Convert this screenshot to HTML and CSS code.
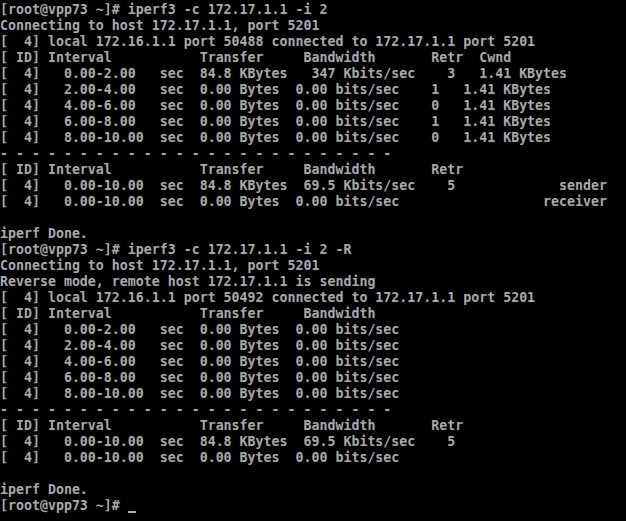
FILE: index.html
```html
<!DOCTYPE html>
<html>
<head>
<meta charset="utf-8">
<link rel="stylesheet" href="styles.css">
</head>
<body>
<pre class="console">[root@vpp73 ~]# iperf3 -c 172.17.1.1 -i 2
Connecting to host 172.17.1.1, port 5201
[  4] local 172.16.1.1 port 50488 connected to 172.17.1.1 port 5201
[ ID] Interval           Transfer     Bandwidth       Retr  Cwnd
[  4]   0.00-2.00   sec  84.8 KBytes   347 Kbits/sec    3   1.41 KBytes
[  4]   2.00-4.00   sec  0.00 Bytes  0.00 bits/sec    1   1.41 KBytes
[  4]   4.00-6.00   sec  0.00 Bytes  0.00 bits/sec    0   1.41 KBytes
[  4]   6.00-8.00   sec  0.00 Bytes  0.00 bits/sec    1   1.41 KBytes
[  4]   8.00-10.00  sec  0.00 Bytes  0.00 bits/sec    0   1.41 KBytes
- - - - - - - - - - - - - - - - - - - - - - - - -
[ ID] Interval           Transfer     Bandwidth       Retr
[  4]   0.00-10.00  sec  84.8 KBytes  69.5 Kbits/sec    5             sender
[  4]   0.00-10.00  sec  0.00 Bytes  0.00 bits/sec                  receiver

iperf Done.
[root@vpp73 ~]# iperf3 -c 172.17.1.1 -i 2 -R
Connecting to host 172.17.1.1, port 5201
Reverse mode, remote host 172.17.1.1 is sending
[  4] local 172.16.1.1 port 50492 connected to 172.17.1.1 port 5201
[ ID] Interval           Transfer     Bandwidth
[  4]   0.00-2.00   sec  0.00 Bytes  0.00 bits/sec
[  4]   2.00-4.00   sec  0.00 Bytes  0.00 bits/sec
[  4]   4.00-6.00   sec  0.00 Bytes  0.00 bits/sec
[  4]   6.00-8.00   sec  0.00 Bytes  0.00 bits/sec
[  4]   8.00-10.00  sec  0.00 Bytes  0.00 bits/sec
- - - - - - - - - - - - - - - - - - - - - - - - -
[ ID] Interval           Transfer     Bandwidth       Retr
[  4]   0.00-10.00  sec  84.8 KBytes  69.5 Kbits/sec    5
[  4]   0.00-10.00  sec  0.00 Bytes  0.00 bits/sec

iperf Done.
[root@vpp73 ~]# <span class="cursor"></span></pre>
</body>
</html>
```

FILE: styles.css
```css
html, body {
  margin: 0;
  padding: 0;
  background: #000;
  width: 626px;
  height: 521px;
  overflow: hidden;
}

.console {
  margin: 0;
  padding: 2px 0 0 0;
  font-family: "DejaVu Sans Mono", "Liberation Mono", monospace;
  font-size: 13.28px;
  font-weight: bold;
  line-height: 16px;
  color: #aaaaaa;
  white-space: pre;
  letter-spacing: 0;
}

.cursor {
  display: inline-block;
  width: 8px;
  height: 2px;
  background: #aaaaaa;
  vertical-align: -3px;
}
```
